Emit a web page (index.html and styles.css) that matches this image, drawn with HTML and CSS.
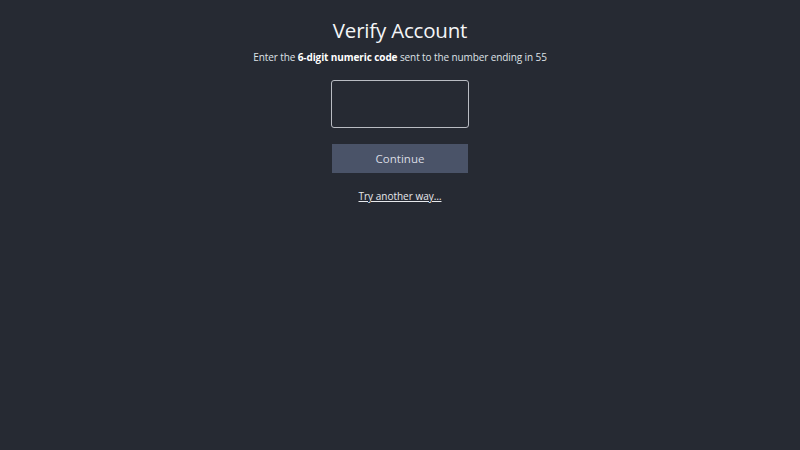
FILE: index.html
```html
<!DOCTYPE html>
<html lang="en">
<head>
<meta charset="utf-8">
<title>Verify Account</title>
<link rel="stylesheet" href="styles.css">
</head>
<body>
<main class="verify">
  <h1 class="verify-title">Verify Account</h1>
  <p class="verify-sub">Enter the <strong>6-digit numeric code</strong> sent to the number ending in 55</p>
  <input class="code-input" type="text" inputmode="numeric" aria-label="Verification code">
  <button class="continue-btn" type="button">Continue</button>
  <a class="alt-link" href="#">Try another way…</a>
</main>
</body>
</html>
```
FILE: styles.css
```css
html, body {
  margin: 0;
  padding: 0;
}
body {
  background: #262a33;
  color: #e6e8ec;
  font-family: "Open Sans", "Noto Sans", sans-serif;
  width: 800px;
  height: 450px;
  overflow: hidden;
}
.verify {
  display: flex;
  flex-direction: column;
  align-items: center;
  padding-top: 16px;
}
.verify-title {
  margin: 0;
  font-size: 20.5px;
  font-weight: 400;
  line-height: 28px;
  color: #f4f5f7;
  letter-spacing: -0.2px;
}
.verify-sub {
  margin: 6px 0 0;
  font-size: 10px;
  line-height: 14px;
  color: #dfe2e7;
  letter-spacing: -0.1px;
}
.verify-sub strong {
  font-weight: 700;
  color: #ffffff;
}
.code-input {
  box-sizing: border-box;
  margin-top: 16px;
  width: 138px;
  height: 48px;
  background: #262a33;
  border: 1px solid #b9bcc3;
  border-radius: 3px;
  outline: none;
  color: #fff;
}
.continue-btn {
  box-sizing: border-box;
  margin-top: 16px;
  width: 136px;
  height: 29px;
  background: #4a5368;
  border: none;
  border-radius: 0;
  color: #d9dce3;
  font-family: inherit;
  font-size: 11.5px;
}
.alt-link {
  margin-top: 16px;
  font-size: 10px;
  color: #e6e8ec;
  text-decoration: underline;
  line-height: 14px;
}
```
